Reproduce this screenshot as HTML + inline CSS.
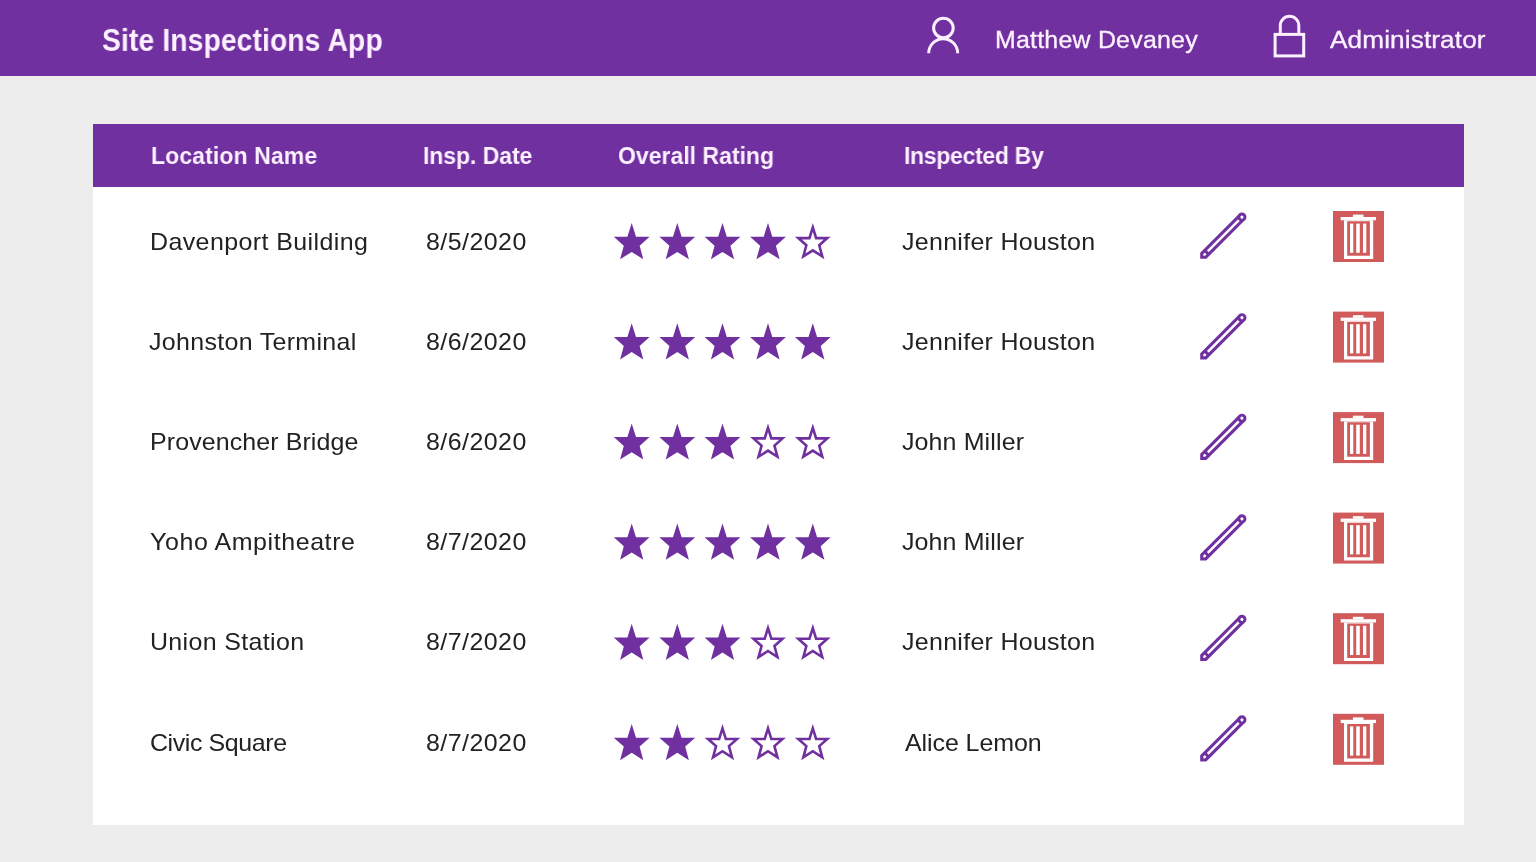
<!DOCTYPE html>
<html><head><meta charset="utf-8"><title>Site Inspections App</title>
<style>
html,body{margin:0;padding:0;}
body{width:1536px;height:862px;background:#ededed;position:relative;overflow:hidden;font-family:"Liberation Sans",sans-serif;}
.t{position:absolute;transform-origin:0 0;will-change:transform;white-space:nowrap;line-height:1;font-family:"Liberation Sans",sans-serif;}
.bar{position:absolute;left:0;top:0;width:1536px;height:76px;background:#7030a0;}
.card{position:absolute;left:93px;top:124px;width:1371px;height:701px;background:#fff;}
.hdr{position:absolute;left:93px;top:124px;width:1371px;height:63px;background:#7030a0;}
svg{position:absolute;left:0;top:0;overflow:visible;}
</style></head><body>
<div class="bar"></div>
<div class="card"></div>
<div class="hdr"></div>

<span class="t" style="left:101.93px;top:25.19px;font-size:30.2px;letter-spacing:0.127px;color:#fdf0ff;font-weight:700;transform:scale(0.936,1.045);">Site Inspections App</span>
<span class="t" style="left:995.47px;top:28.09px;font-size:24.7px;letter-spacing:0.214px;color:#fdf0ff;-webkit-text-stroke:0.35px #fdf0ff;transform:scale(1.01,1.0);">Matthew Devaney</span>
<span class="t" style="left:1330.23px;top:28.09px;font-size:24.7px;letter-spacing:0.109px;color:#fdf0ff;-webkit-text-stroke:0.35px #fdf0ff;transform:scale(1.06,1.0);">Administrator</span>
<span class="t" style="left:150.71px;top:144.39px;font-size:24.7px;letter-spacing:0.138px;color:#fdf0ff;font-weight:700;transform:scale(0.93,1.0);">Location Name</span>
<span class="t" style="left:423.05px;top:144.39px;font-size:24.7px;letter-spacing:-0.050px;color:#fdf0ff;font-weight:700;transform:scale(0.93,1.0);">Insp. Date</span>
<span class="t" style="left:617.68px;top:144.39px;font-size:24.7px;letter-spacing:0.029px;color:#fdf0ff;font-weight:700;transform:scale(0.93,1.0);">Overall Rating</span>
<span class="t" style="left:904.18px;top:144.39px;font-size:24.7px;letter-spacing:-0.299px;color:#fdf0ff;font-weight:700;transform:scale(0.93,1.0);">Inspected By</span>
<span class="t" style="left:150.07px;top:229.68px;font-size:24px;letter-spacing:0.390px;color:#222222;transform:scale(1.04,1.0);">Davenport Building</span>
<span class="t" style="left:426.27px;top:229.68px;font-size:24px;letter-spacing:0.433px;color:#222222;transform:scale(1.04,1.0);">8/5/2020</span>
<span class="t" style="left:901.97px;top:229.68px;font-size:24px;letter-spacing:0.284px;color:#222222;transform:scale(1.04,1.0);">Jennifer Houston</span>
<span class="t" style="left:149.24px;top:329.85px;font-size:24px;letter-spacing:0.311px;color:#222222;transform:scale(1.04,1.0);">Johnston Terminal</span>
<span class="t" style="left:426.27px;top:329.85px;font-size:24px;letter-spacing:0.433px;color:#222222;transform:scale(1.04,1.0);">8/6/2020</span>
<span class="t" style="left:901.97px;top:329.85px;font-size:24px;letter-spacing:0.284px;color:#222222;transform:scale(1.04,1.0);">Jennifer Houston</span>
<span class="t" style="left:150.07px;top:430.02px;font-size:24px;letter-spacing:0.093px;color:#222222;transform:scale(1.04,1.0);">Provencher Bridge</span>
<span class="t" style="left:426.27px;top:430.02px;font-size:24px;letter-spacing:0.433px;color:#222222;transform:scale(1.04,1.0);">8/6/2020</span>
<span class="t" style="left:901.97px;top:430.02px;font-size:24px;letter-spacing:0.122px;color:#222222;transform:scale(1.04,1.0);">John Miller</span>
<span class="t" style="left:150.06px;top:530.19px;font-size:24px;letter-spacing:0.563px;color:#222222;transform:scale(1.04,1.0);">Yoho Ampitheatre</span>
<span class="t" style="left:426.27px;top:530.19px;font-size:24px;letter-spacing:0.433px;color:#222222;transform:scale(1.04,1.0);">8/7/2020</span>
<span class="t" style="left:901.97px;top:530.19px;font-size:24px;letter-spacing:0.122px;color:#222222;transform:scale(1.04,1.0);">John Miller</span>
<span class="t" style="left:150.46px;top:630.36px;font-size:24px;letter-spacing:0.333px;color:#222222;transform:scale(1.04,1.0);">Union Station</span>
<span class="t" style="left:426.27px;top:630.36px;font-size:24px;letter-spacing:0.433px;color:#222222;transform:scale(1.04,1.0);">8/7/2020</span>
<span class="t" style="left:901.97px;top:630.36px;font-size:24px;letter-spacing:0.284px;color:#222222;transform:scale(1.04,1.0);">Jennifer Houston</span>
<span class="t" style="left:150.16px;top:730.53px;font-size:24px;letter-spacing:-0.391px;color:#222222;transform:scale(1.04,1.0);">Civic Square</span>
<span class="t" style="left:426.27px;top:730.53px;font-size:24px;letter-spacing:0.433px;color:#222222;transform:scale(1.04,1.0);">8/7/2020</span>
<span class="t" style="left:904.50px;top:730.53px;font-size:24px;letter-spacing:-0.066px;color:#222222;transform:scale(1.04,1.0);">Alice Lemon</span>
<svg width="1536" height="862" viewBox="0 0 1536 862">
<defs>
<polygon id="st" points="0,0 4.3,13.7 17.9,13.7 7.9,22.6 11.6,36.2 0,28.8 -11.6,36.2 -7.9,22.6 -17.9,13.7 -4.3,13.7"/>
<clipPath id="stc"><use href="#st"/></clipPath>
<g id="pen" fill="none" stroke="#7030a0" stroke-width="3.1" stroke-linejoin="miter" stroke-linecap="butt">
<path d="M58,-2.8 L5,-2.8 L2.2,0 L5,2.8 L58,2.8"/>
<path d="M9.2,-2.8 V2.8"/>
<circle cx="59" cy="0" r="3.05" stroke-width="3" fill="#fff"/>
</g>
<g id="trash">
<rect x="0" y="0" width="51" height="51" fill="#d15b5b"/>
<rect x="19.9" y="3.6" width="10.6" height="2.6" fill="#fff"/>
<rect x="7.7" y="6" width="35.3" height="3.3" fill="#fff"/>
<path fill="#fff" fill-rule="evenodd" d="M11,9.3 H40.2 V47.9 H11 Z M14.2,10.2 V44.7 H36.9 V10.2 Z"/>
<rect x="17" y="12.6" width="3.3" height="29.2" fill="#fff"/>
<rect x="23.2" y="12.6" width="3.6" height="29.2" fill="#fff"/>
<rect x="30" y="12.6" width="3.3" height="29.2" fill="#fff"/>
</g>
</defs>
<g fill="none" stroke="#fdf0ff" stroke-width="3"><circle cx="943.4" cy="28" r="9.8"/><path d="M928.7,53.3 A14.5,14.5 0 0 1 957.7,53.3"/><rect x="1275.1" y="34.4" width="28.6" height="21.5"/><path d="M1280.3,34.4 V25.55 A9.25,9.25 0 0 1 1298.8,25.55 V34.4"/></g>
<use href="#st" x="631.7" y="223.1" fill="#7030a0"/>
<use href="#st" x="677.3" y="223.1" fill="#7030a0"/>
<use href="#st" x="722.5" y="223.1" fill="#7030a0"/>
<use href="#st" x="768" y="223.1" fill="#7030a0"/>
<g transform="translate(812.8,223.1)"><use href="#st" fill="#fff" stroke="#7030a0" stroke-width="5.2" clip-path="url(#stc)"/></g>
<use href="#pen" transform="translate(1200.2,258.8) rotate(-45)"/>
<use href="#trash" x="1333" y="211.0"/>
<use href="#st" x="631.7" y="323.3" fill="#7030a0"/>
<use href="#st" x="677.3" y="323.3" fill="#7030a0"/>
<use href="#st" x="722.5" y="323.3" fill="#7030a0"/>
<use href="#st" x="768" y="323.3" fill="#7030a0"/>
<use href="#st" x="812.8" y="323.3" fill="#7030a0"/>
<use href="#pen" transform="translate(1200.2,359.4) rotate(-45)"/>
<use href="#trash" x="1333" y="311.6"/>
<use href="#st" x="631.7" y="423.4" fill="#7030a0"/>
<use href="#st" x="677.3" y="423.4" fill="#7030a0"/>
<use href="#st" x="722.5" y="423.4" fill="#7030a0"/>
<g transform="translate(768,423.4)"><use href="#st" fill="#fff" stroke="#7030a0" stroke-width="5.2" clip-path="url(#stc)"/></g>
<g transform="translate(812.8,423.4)"><use href="#st" fill="#fff" stroke="#7030a0" stroke-width="5.2" clip-path="url(#stc)"/></g>
<use href="#pen" transform="translate(1200.2,459.9) rotate(-45)"/>
<use href="#trash" x="1333" y="412.1"/>
<use href="#st" x="631.7" y="523.6" fill="#7030a0"/>
<use href="#st" x="677.3" y="523.6" fill="#7030a0"/>
<use href="#st" x="722.5" y="523.6" fill="#7030a0"/>
<use href="#st" x="768" y="523.6" fill="#7030a0"/>
<use href="#st" x="812.8" y="523.6" fill="#7030a0"/>
<use href="#pen" transform="translate(1200.2,560.5) rotate(-45)"/>
<use href="#trash" x="1333" y="512.6"/>
<use href="#st" x="631.7" y="623.8" fill="#7030a0"/>
<use href="#st" x="677.3" y="623.8" fill="#7030a0"/>
<use href="#st" x="722.5" y="623.8" fill="#7030a0"/>
<g transform="translate(768,623.8)"><use href="#st" fill="#fff" stroke="#7030a0" stroke-width="5.2" clip-path="url(#stc)"/></g>
<g transform="translate(812.8,623.8)"><use href="#st" fill="#fff" stroke="#7030a0" stroke-width="5.2" clip-path="url(#stc)"/></g>
<use href="#pen" transform="translate(1200.2,661.0) rotate(-45)"/>
<use href="#trash" x="1333" y="613.2"/>
<use href="#st" x="631.7" y="724.0" fill="#7030a0"/>
<use href="#st" x="677.3" y="724.0" fill="#7030a0"/>
<g transform="translate(722.5,724.0)"><use href="#st" fill="#fff" stroke="#7030a0" stroke-width="5.2" clip-path="url(#stc)"/></g>
<g transform="translate(768,724.0)"><use href="#st" fill="#fff" stroke="#7030a0" stroke-width="5.2" clip-path="url(#stc)"/></g>
<g transform="translate(812.8,724.0)"><use href="#st" fill="#fff" stroke="#7030a0" stroke-width="5.2" clip-path="url(#stc)"/></g>
<use href="#pen" transform="translate(1200.2,761.5) rotate(-45)"/>
<use href="#trash" x="1333" y="713.8"/>
</svg>
</body></html>
